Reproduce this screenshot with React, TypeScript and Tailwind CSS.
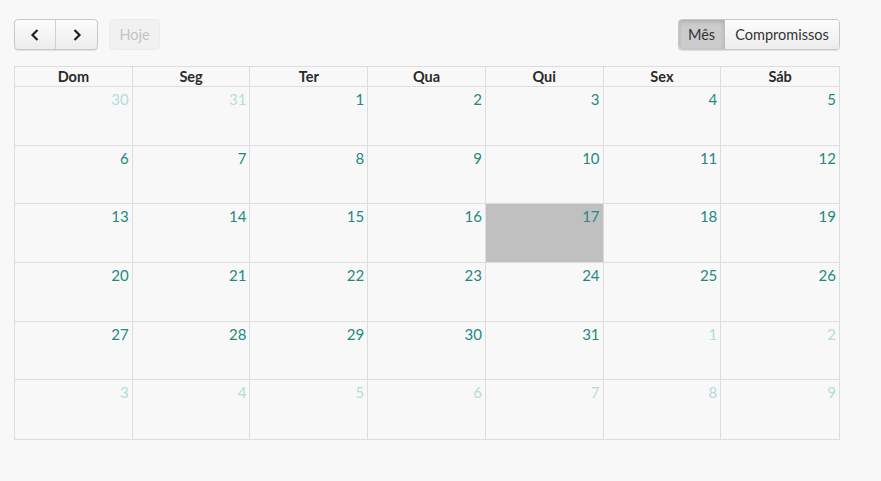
import React from "react";

const days = ["Dom", "Seg", "Ter", "Qua", "Qui", "Sex", "Sáb"];

type Cell = { n: number; other: boolean; today?: boolean };

function buildCells(): Cell[] {
  const cells: Cell[] = [{ n: 30, other: true }, { n: 31, other: true }];
  for (let i = 1; i <= 31; i++) cells.push({ n: i, other: false, today: i === 17 });
  for (let i = 1; i <= 9; i++) cells.push({ n: i, other: true });
  return cells;
}

export default function App() {
  const cells = buildCells();
  const font = { fontFamily: "Lato, 'Open Sans', sans-serif" };
  return (
    <div className="w-[881px] h-[481px] bg-[#f8f8f8] text-[#333]" style={font}>
      <div className="pl-[14px] pt-[19px] w-[840px]">
        <div className="flex items-center justify-between h-[31px]">
          <div className="flex items-center gap-[11px]">
            <div className="flex h-[31px] rounded-[4px] border border-[#c8c8c8] shadow-[0_1px_1px_rgba(0,0,0,0.1)] bg-gradient-to-b from-[#fdfdfd] to-[#ececec] overflow-hidden">
              <button className="w-[41px] h-full flex items-center justify-center border-r border-[#d0d0d0]">
                <svg width="10" height="14" viewBox="0 0 10 14"><path d="M7.5 2 L2.5 7 L7.5 12" fill="none" stroke="#222" strokeWidth="2.2" /></svg>
              </button>
              <button className="w-[41px] h-full flex items-center justify-center">
                <svg width="10" height="14" viewBox="0 0 10 14"><path d="M2.5 2 L7.5 7 L2.5 12" fill="none" stroke="#222" strokeWidth="2.2" /></svg>
              </button>
            </div>
            <button className="w-[51px] h-[31px] rounded-[4px] border border-[#ececec] bg-[#f1f1f1] text-[#c4c4c4] text-[14.5px]">Hoje</button>
          </div>
          <div className="flex h-[31px] rounded-[4px] border border-[#c8c8c8] shadow-[0_1px_1px_rgba(0,0,0,0.1)] overflow-hidden text-[14.5px]">
            <button className="w-[46px] h-full bg-[#cccccc] border-r border-[#bdbdbd] text-[#333] shadow-[inset_0_2px_4px_rgba(0,0,0,0.15)]">Mês</button>
            <button className="w-[114px] h-full bg-gradient-to-b from-[#fdfdfd] to-[#ececec] text-[#333]">Compromissos</button>
          </div>
        </div>
        <div className="mt-[16px] w-[826px] border border-[#dddddd]">
          <div className="grid grid-cols-7 h-[20px] border-b border-[#dddddd]">
            {days.map((d, i) => (
              <div key={d} className={`text-center text-[14.5px] font-bold leading-[19px] text-[#2a2a2a] ${i < 6 ? "border-r border-[#dddddd]" : ""}`}>{d}</div>
            ))}
          </div>
          <div className="grid grid-cols-7 grid-rows-6 h-[352px]">
            {cells.map((c, idx) => {
              const col = idx % 7;
              const row = Math.floor(idx / 7);
              return (
                <div
                  key={idx}
                  className={`text-right pr-[3px] pt-[2px] text-[15px] leading-[20px] ${col < 6 ? "border-r border-[#dddddd]" : ""} ${row < 5 ? "border-b border-[#dddddd]" : ""} ${c.today ? "bg-[#c0c0c0]" : ""} ${c.other ? "text-[#b3dedb]" : "text-[#23897f]"}`}
                >
                  {c.n}
                </div>
              );
            })}
          </div>
        </div>
      </div>
    </div>
  );
}
